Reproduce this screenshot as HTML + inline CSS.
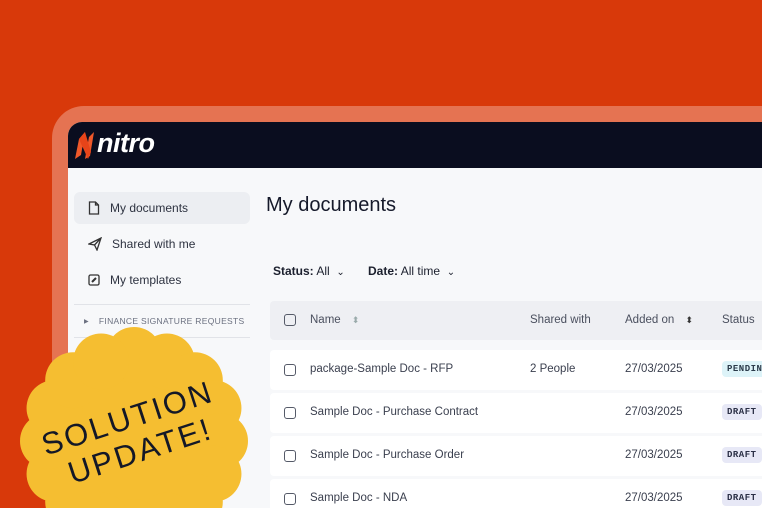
<!DOCTYPE html>
<html><head><style>
*{margin:0;padding:0;box-sizing:border-box}
html,body{width:762px;height:508px;overflow:hidden}
body{background:#d8390a;font-family:"Liberation Sans",sans-serif;position:relative}
.frame{position:absolute;left:52px;top:106px;width:760px;height:402px;background:#e57352;border-radius:32px 0 0 0}
.app{position:absolute;left:68px;top:122px;width:694px;height:386px;background:#f7f8fa;border-radius:14px 0 0 0;overflow:hidden}
.hdr{height:46px;background:#0a0d1f;position:relative}
.logo{position:absolute;left:29px;top:6px;color:#fff;font-weight:bold;font-style:italic;font-size:27px;letter-spacing:-0.5px}
.side{position:absolute;left:6px;top:70px;width:176px}
.item{height:32px;display:flex;align-items:center;padding-left:14px;font-size:12px;color:#2d3240;margin-bottom:4px;border-radius:6px}
.item.act{background:#eceef2}
.item svg{margin-right:10px}
.sep{height:1px;background:#e1e3e8;margin:8px 0}
.fin{font-size:8.5px;color:#6b7080;letter-spacing:.3px;padding-left:22px;height:16px;display:flex;align-items:center}
.main{position:absolute;left:198px;top:0}
h1{position:absolute;left:0;top:72px;font-weight:normal;font-size:20px;color:#15192a;white-space:nowrap}
.flt{position:absolute;top:142px;font-size:12px;color:#1b1f2d;white-space:nowrap}
.th{position:absolute;left:4px;top:179px;width:600px;height:39px;background:#eeeff3;border-radius:4px}
.row{position:absolute;left:4px;width:600px;height:40px;background:#fff;border-radius:4px}
.c{position:absolute;font-size:11.5px;color:#3a3f4e;white-space:nowrap}
.cb{position:absolute;left:14px;width:12px;height:12px;border:1.3px solid #555a68;border-radius:3px}
.tag{position:absolute;left:452px;font-family:"Liberation Mono",monospace;font-weight:bold;font-size:9px;padding:3px 5px;border-radius:4px;letter-spacing:.5px}
</style></head><body>
<div class="frame"></div>
<div class="app">
 <div class="hdr">
  <svg style="position:absolute;left:5px;top:6px" width="24" height="34" viewBox="0 0 24 34"><path d="M2 31 L6 11 L12 4 L8 27 Z" fill="#f0582a"/><path d="M12 31 L16 9 L21 4 L17 28 Z" fill="#f0582a"/><path d="M6 11 L12 4 L18 24 L15 31 Z" fill="#e74419"/></svg>
  <div class="logo">nitro</div>
 </div>
 <div class="side">
  <div class="item act"><svg width="12" height="14" viewBox="0 0 12 14"><path d="M1.5 1h6l3 3v9h-9z M7.5 1v3h3" fill="none" stroke="#333" stroke-width="1.3"/></svg>My documents</div>
  <div class="item"><svg width="14" height="14" viewBox="0 0 14 14"><path d="M1 7 L13 1 L9 13 L6.5 8 Z M6.5 8 L13 1" fill="none" stroke="#333" stroke-width="1.3"/></svg>Shared with me</div>
  <div class="item"><svg width="12" height="12" viewBox="0 0 12 12"><rect x="1" y="1" width="10" height="10" rx="1.5" fill="none" stroke="#333" stroke-width="1.3"/><path d="M4 8 L8 4" stroke="#333" stroke-width="2"/></svg>My templates</div>
  <div class="sep"></div>
  <div class="fin"><span style="font-size:6px;margin-right:10px;margin-left:-12px">▶</span>FINANCE SIGNATURE REQUESTS</div>
  <div class="sep"></div>
 </div>
 <div class="main">
  <h1>My documents</h1>
  <div class="flt" style="left:7px"><b>Status:</b> All &nbsp;<span style="font-size:10px">⌄</span></div>
  <div class="flt" style="left:102px"><b>Date:</b> All time &nbsp;<span style="font-size:10px">⌄</span></div>
  <div class="th">
   <div class="cb" style="top:13px"></div>
   <div class="c" style="left:40px;top:13px;color:#4a4f5e">Name <span style="color:#9aa;font-size:9px;margin-left:8px">⬍</span></div>
   <div class="c" style="left:260px;top:13px;color:#4a4f5e">Shared with</div>
   <div class="c" style="left:355px;top:13px;color:#4a4f5e">Added on <span style="color:#333;font-size:9px;margin-left:8px">⬍</span></div>
   <div class="c" style="left:452px;top:13px;color:#4a4f5e">Status</div>
  </div>
  <div class="row" style="top:228px"><div class="cb" style="top:14px"></div><div class="c" style="left:40px;top:13px">package-Sample Doc - RFP</div><div class="c" style="left:260px;top:13px">2 People</div><div class="c" style="left:355px;top:13px">27/03/2025</div><div class="tag" style="top:11px;background:#ddf3f8;color:#2a3a4a">PENDING</div></div>
  <div class="row" style="top:271px"><div class="cb" style="top:14px"></div><div class="c" style="left:40px;top:13px">Sample Doc - Purchase Contract</div><div class="c" style="left:355px;top:13px">27/03/2025</div><div class="tag" style="top:11px;background:#e7e8f6;color:#2a2f45">DRAFT</div></div>
  <div class="row" style="top:314px"><div class="cb" style="top:14px"></div><div class="c" style="left:40px;top:13px">Sample Doc - Purchase Order</div><div class="c" style="left:355px;top:13px">27/03/2025</div><div class="tag" style="top:11px;background:#e7e8f6;color:#2a2f45">DRAFT</div></div>
  <div class="row" style="top:357px"><div class="cb" style="top:14px"></div><div class="c" style="left:40px;top:13px">Sample Doc - NDA</div><div class="c" style="left:355px;top:13px">27/03/2025</div><div class="tag" style="top:11px;background:#e7e8f6;color:#2a2f45">DRAFT</div></div>
 </div>
</div>
<svg style="position:absolute;left:0;top:310px" width="270" height="198" viewBox="0 310 270 198">
 <g fill="#f5be31" transform="translate(134 441)">
  <circle r="106"/>
  <g id="s"><circle cx="0" cy="-86" r="28"/><circle cx="0" cy="-86" r="28" transform="rotate(22.5)"/><circle cx="0" cy="-86" r="28" transform="rotate(45)"/><circle cx="0" cy="-86" r="28" transform="rotate(67.5)"/></g>
  <use href="#s" transform="rotate(90)"/><use href="#s" transform="rotate(180)"/><use href="#s" transform="rotate(270)"/>
 </g>
 <g transform="translate(132 432) rotate(-18)" font-family="Liberation Sans,sans-serif" font-size="31" fill="#141827" text-anchor="middle" letter-spacing="2.5">
  <text x="0" y="-4">SOLUTION</text>
  <text x="2" y="31">UPDATE!</text>
 </g>
</svg>
</body></html>
